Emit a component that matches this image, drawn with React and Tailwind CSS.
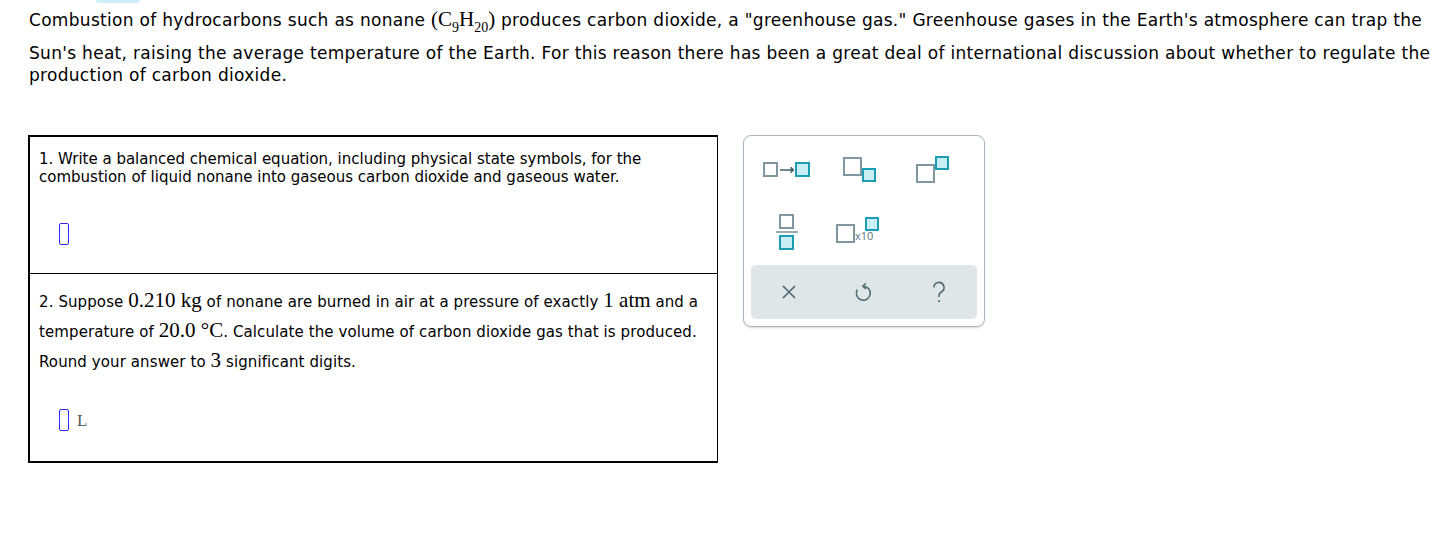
import React from "react";

const sans = { fontFamily: '"DejaVu Sans", Verdana, sans-serif' };
const serif = { fontFamily: '"Liberation Serif", "Times New Roman", serif' };

const M = ({ children, className = "" }) => (
  <span style={serif} className={`text-[21px] leading-none tracking-normal ${className}`}>{children}</span>
);

const GraySq = ({ x, y, s }) => (
  <rect x={x} y={y} width={s} height={s} fill="white" stroke="#7f98a0" strokeWidth="2" />
);
const CyanSq = ({ x, y, s }) => (
  <rect x={x} y={y} width={s} height={s} fill="#c9eef4" stroke="#1c9db3" strokeWidth="2" />
);

const ArrowIcon = () => (
  <svg width="48" height="16" viewBox="0 0 48 16">
    <GraySq x={1} y={1} s={13} />
    <path d="M17 8h13" stroke="#4d6b75" strokeWidth="1.6" />
    <path d="M28 5l3 3-3 3z" fill="#4d6b75" stroke="#4d6b75" strokeWidth="1" />
    <CyanSq x={33} y={1} s={13} />
  </svg>
);

const SubIcon = () => (
  <svg width="34" height="26" viewBox="0 0 34 26">
    <GraySq x={1} y={1} s={17} />
    <CyanSq x={20} y={12} s={12} />
  </svg>
);

const SupIcon = () => (
  <svg width="34" height="28" viewBox="0 0 34 28">
    <GraySq x={1} y={9} s={17} />
    <CyanSq x={20} y={1} s={12} />
  </svg>
);

const FracIcon = () => (
  <svg width="24" height="36" viewBox="0 0 24 36">
    <GraySq x={5} y={1} s={13} />
    <path d="M1 18h22" stroke="#7f98a0" strokeWidth="1.6" />
    <CyanSq x={5} y={22} s={13} />
  </svg>
);

const X10Icon = () => (
  <div className="relative w-[44px] h-[26px] -translate-x-[2px] -translate-y-[2px]">
    <svg width="44" height="26" viewBox="0 0 44 26" className="absolute left-0 top-0">
      <GraySq x={1} y={8} s={17} />
      <CyanSq x={30} y={1} s={12} />
    </svg>
    <span className="absolute left-[19px] top-[13px] text-[11px] leading-[11px] text-[#5a7580]" style={{ fontFamily: '"Open Sans", sans-serif' }}>x10</span>
  </div>
);

const ToolButton = ({ children }) => (
  <div className="flex items-center justify-center">{children}</div>
);

const Sub = ({ children }) => (
  <span className="inline-block text-[14px] translate-y-[6px]">{children}</span>
);

export default function App() {
  return (
    <div className="w-[1444px] h-[554px] bg-white text-black relative" style={sans}>
      <div className="absolute left-[96px] top-0 w-[44px] h-[3px] rounded-b-full bg-[#cdeff7]" />

      <div className="pl-[29px] pt-[8px] text-[17px] leading-[22px] tracking-[0.3px]">
        <div className="h-[34px] pt-[1px] whitespace-nowrap">
          Combustion of hydrocarbons such as nonane{" "}
          <M className="text-[20px]">
            (C<Sub>9</Sub>H<Sub>20</Sub>)
          </M>{" "}
          produces carbon dioxide, a "greenhouse gas." Greenhouse gases in the Earth's atmosphere can trap the
        </div>
        <div className="whitespace-nowrap">
          Sun's heat, raising the average temperature of the Earth. For this reason there has been a great deal of international discussion about whether to regulate the
        </div>
        <div className="whitespace-nowrap">production of carbon dioxide.</div>
      </div>

      <div className="flex items-start gap-[25px] pl-[28px] mt-[49px]">
        <div className="w-[690px] border-2 border-r border-black">
          <div className="h-[137px] border-b border-black pl-[9px] pt-[13px] text-[15px] leading-[18px]">
            <div>1. Write a balanced chemical equation, including physical state symbols, for the</div>
            <div>combustion of liquid nonane into gaseous carbon dioxide and gaseous water.</div>
            <div className="ml-[20px] mt-[37px] w-[10px] h-[22px] border-[1.5px] border-[#2b2bff] rounded-[2px]" />
          </div>
          <div className="h-[187px] pl-[9px] pt-[13px] text-[15px] leading-[30px] tracking-[0.1px]">
            <div className="h-[30px] whitespace-nowrap">
              2. Suppose <M>0.210 kg</M> of nonane are burned in air at a pressure of exactly <M>1 atm</M> and a
            </div>
            <div className="h-[30px] whitespace-nowrap">
              temperature of <M>20.0 °C</M>. Calculate the volume of carbon dioxide gas that is produced.
            </div>
            <div className="h-[30px] whitespace-nowrap">
              Round your answer to <M>3</M> significant digits.
            </div>
            <div className="flex items-center gap-[8px] ml-[20px] mt-[32px] h-[22px] leading-none">
              <div className="w-[10px] h-[22px] border-[1.5px] border-[#2b2bff] rounded-[2px]" />
              <span style={serif} className="text-[17px] text-[#555]">L</span>
            </div>
          </div>
        </div>

        <div className="w-[242px] h-[192px] rounded-[8px] border border-[#a9b8bd] shadow-[0_1px_2px_rgba(0,0,0,0.15)] px-[7px] pt-[3px] flex flex-col">
          <div className="grid grid-cols-3 h-[62px] pr-[8px]">
            <ToolButton><ArrowIcon /></ToolButton>
            <ToolButton><SubIcon /></ToolButton>
            <ToolButton><SupIcon /></ToolButton>
          </div>
          <div className="grid grid-cols-3 h-[62px] pr-[8px]">
            <ToolButton><FracIcon /></ToolButton>
            <ToolButton><X10Icon /></ToolButton>
            <div />
          </div>
          <div className="mt-[2px] h-[54px] rounded-[5px] bg-[#dfe6e8] grid grid-cols-3">
            <ToolButton>
              <svg width="16" height="16" viewBox="0 0 16 16">
                <path d="M2 2l12 12M14 2L2 14" stroke="#4d6b75" strokeWidth="1.7" />
              </svg>
            </ToolButton>
            <ToolButton>
              <svg width="20" height="20" viewBox="0 0 20 20">
                <path d="M9 4.2 A7 7 0 1 1 3.3 7.6" fill="none" stroke="#4d6b75" strokeWidth="1.6" />
                <path d="M11.8 1.2 L8.9 4.2 L12 7" fill="none" stroke="#4d6b75" strokeWidth="1.6" />
              </svg>
            </ToolButton>
            <ToolButton>
              <svg width="14" height="22" viewBox="0 0 14 22">
                <path d="M2 6.5a5 5 0 1 1 7.5 4.3c-1.6 1-2.5 2-2.5 3.7v1.5" fill="none" stroke="#4d6b75" strokeWidth="1.6" />
                <circle cx="7" cy="20" r="1.1" fill="#4d6b75" />
              </svg>
            </ToolButton>
          </div>
        </div>
      </div>
    </div>
  );
}
